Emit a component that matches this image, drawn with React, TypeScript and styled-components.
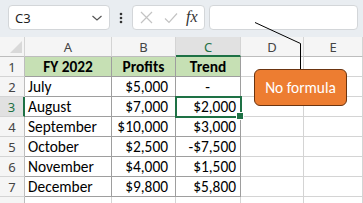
import React from "react";
import styled, { createGlobalStyle, css } from "styled-components";

const Global = createGlobalStyle`
  html, body { margin: 0; padding: 0; background: #ffffff; }
  body { width: 363px; height: 203px; overflow: hidden; }
  * { box-sizing: border-box; }
`;

const Page = styled.div`
  position: relative;
  width: 363px;
  height: 203px;
  overflow: hidden;
  font-family: "Carlito", "Lato", "Liberation Sans", sans-serif;
`;

const Toolbar = styled.div`
  height: 37px;
  background: #e9edf1;
  display: flex;
  align-items: flex-start;
  padding: 5px 0 0 8px;
`;

const Box = styled.div<{ $w?: number; $grow?: boolean }>`
  height: 25px;
  background: #ffffff;
  border: 1px solid #d3d6d9;
  border-radius: 4px;
  display: flex;
  align-items: center;
  ${(p) => (p.$w ? css`width: ${p.$w}px;` : "")}
  ${(p) => (p.$grow ? css`flex: 1;` : "")}
`;

const NameBox = styled(Box)`
  padding: 0 6px 0 6px;
  justify-content: space-between;
  font-family: "Noto Sans", "Open Sans", sans-serif;
  font-size: 13px;
  color: #1f1f1f;
`;

const Dots = styled.div`
  width: 22px;
  height: 25px;
  display: flex;
  align-items: center;
  justify-content: center;
`;

const FxBox = styled(Box)`
  padding: 0 0 0 4px;
`;

const FxText = styled.span`
  font-family: "Liberation Serif", "DejaVu Serif", serif;
  font-style: italic;
  font-size: 16px;
  color: #333;
  margin-left: 8px;
  margin-top: -2px;
`;

const FormulaInput = styled(Box)`
  margin-left: 4px;
  margin-right: 5px;
`;

const Sheet = styled.div`
  position: relative;
  display: grid;
  grid-template-columns: 25px 87px 64px 65px 63px 1fr;
  grid-auto-rows: 20px;
`;

const Corner = styled.div`
  background: #f5f5f5;
  border-right: 1px solid #d4d4d4;
  border-bottom: 1px solid #bdbdbd;
  position: relative;
  &::after {
    content: "";
    position: absolute;
    right: 2px;
    bottom: 3px;
    width: 0;
    height: 0;
    border-left: 12px solid transparent;
    border-bottom: 12px solid #d9d9d9;
  }
`;

const ColHead = styled.div<{ $sel?: boolean }>`
  background: ${(p) => (p.$sel ? "#e1e1e1" : "#f5f5f5")};
  color: ${(p) => (p.$sel ? "#1e7145" : "#444")};
  border-right: 1px solid #d4d4d4;
  border-bottom: ${(p) => (p.$sel ? "2px solid #1e7145" : "1px solid #bdbdbd")};
  font-family: "Noto Sans", "Open Sans", sans-serif;
  font-size: 13px;
  display: flex;
  align-items: center;
  justify-content: center;
  padding-top: 1px;
`;

const RowHead = styled.div<{ $sel?: boolean }>`
  background: ${(p) => (p.$sel ? "#e1e1e1" : "#f5f5f5")};
  color: ${(p) => (p.$sel ? "#1e7145" : "#444")};
  border-right: ${(p) => (p.$sel ? "2px solid #1e7145" : "1px solid #bdbdbd")};
  border-bottom: 1px solid #d4d4d4;
  font-family: "Noto Sans", "Open Sans", sans-serif;
  font-size: 13px;
  display: flex;
  align-items: center;
  justify-content: center;
`;

const Cell = styled.div<{
  $align?: "left" | "right" | "center";
  $head?: boolean;
  $table?: boolean;
  $pr?: number;
}>`
  background: ${(p) => (p.$head ? "#c6e0b4" : "#ffffff")};
  border-right: 1px solid ${(p) => (p.$table ? "#9e9e9e" : "#d4d4d4")};
  border-bottom: 1px solid ${(p) => (p.$table ? "#9e9e9e" : "#d4d4d4")};
  font-size: 15.4px;
  font-weight: ${(p) => (p.$head ? 700 : 400)};
  color: #000;
  display: flex;
  align-items: center;
  white-space: nowrap;
  justify-content: ${(p) =>
    p.$align === "right" ? "flex-end" : p.$align === "center" ? "center" : "flex-start"};
  padding: 0 ${(p) => p.$pr ?? 3}px 0 3px;
`;

const Selection = styled.div`
  position: absolute;
  left: 175px;
  top: 59px;
  width: 67px;
  height: 22px;
  border: 2px solid #1e7145;
  pointer-events: none;
  &::after {
    content: "";
    position: absolute;
    right: -4px;
    bottom: -4px;
    width: 6px;
    height: 6px;
    background: #1e7145;
    border: 1px solid #ffffff;
  }
`;

const Callout = styled.div`
  position: absolute;
  left: 254px;
  top: 69px;
  width: 93px;
  height: 37px;
  background: #ed7d31;
  border: 1px solid #6b3410;
  border-radius: 6px;
  color: #ffffff;
  font-family: "Carlito", "Lato", "Liberation Sans", sans-serif;
  font-size: 15.4px;
  display: flex;
  align-items: center;
  justify-content: center;
`;

const Leader = styled.svg`
  position: absolute;
  left: 0;
  top: 0;
  pointer-events: none;
`;

type Row = [string, string, string];
const rows: Row[] = [
  ["July", "$5,000", "-"],
  ["August", "$7,000", "$2,000"],
  ["September", "$10,000", "$3,000"],
  ["October", "$2,500", "-$7,500"],
  ["November", "$4,000", "$1,500"],
  ["December", "$9,800", "$5,800"],
];

const cols = ["A", "B", "C", "D", "E"];

export default function App() {
  return (
    <Page>
      <Global />
      <Toolbar>
        <NameBox $w={102}>
          <span>C3</span>
          <svg width="12" height="8" viewBox="0 0 12 8">
            <path d="M1.5 2 L6 6 L10.5 2" fill="none" stroke="#555" strokeWidth="1.2" />
          </svg>
        </NameBox>
        <Dots>
          <svg width="4" height="12" viewBox="0 0 4 12">
            <circle cx="2" cy="2" r="1.3" fill="#333" />
            <circle cx="2" cy="6" r="1.3" fill="#333" />
            <circle cx="2" cy="10" r="1.3" fill="#333" />
          </svg>
        </Dots>
        <FxBox $w={73}>
          <svg width="13" height="13" viewBox="0 0 13 13" style={{ marginLeft: 3 }}>
            <path d="M1 1 L12 12 M12 1 L1 12" stroke="#c3c3c3" strokeWidth="1.2" />
          </svg>
          <svg width="14" height="12" viewBox="0 0 14 12" style={{ marginLeft: 11 }}>
            <path d="M1 6.5 L5 10.5 L13 1.5" fill="none" stroke="#c3c3c3" strokeWidth="1.2" />
          </svg>
          <FxText>fx</FxText>
        </FxBox>
        <FormulaInput $grow />
      </Toolbar>
      <Sheet>
        <Corner />
        {cols.map((c) => (
          <ColHead key={c} $sel={c === "C"}>
            {c}
          </ColHead>
        ))}
        <RowHead>1</RowHead>
        <Cell $head $table $align="center">FY 2022</Cell>
        <Cell $head $table $align="center">Profits</Cell>
        <Cell $head $table $align="center">Trend</Cell>
        <Cell />
        <Cell />
        {rows.map((r, i) => (
          <React.Fragment key={r[0]}>
            <RowHead $sel={i === 1}>{i + 2}</RowHead>
            <Cell $table>{r[0]}</Cell>
            <Cell $table $align="right" $pr={7}>{r[1]}</Cell>
            <Cell $table $align={r[2] === "-" ? "center" : "right"} $pr={4}>{r[2]}</Cell>
            <Cell />
            <Cell />
          </React.Fragment>
        ))}
        <RowHead />
        <Cell />
        <Cell />
        <Cell />
        <Cell />
        <Cell />
        <Selection />
      </Sheet>
      <Leader width="363" height="203" viewBox="0 0 363 203">
        <path d="M255 22.5 L300.5 43.5 L300.5 69" fill="none" stroke="#000" strokeWidth="1" />
      </Leader>
      <Callout>No formula</Callout>
    </Page>
  );
}
